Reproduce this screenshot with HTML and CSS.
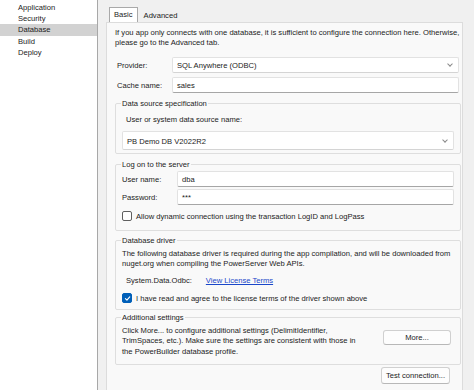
FILE: index.html
```html
<!DOCTYPE html>
<html lang="en">
<head>
  <meta charset="UTF-8" />
  <title>Database</title>
  <link rel="stylesheet" href="styles.css">
</head>
<body>
  <div class="window">
    <nav class="tree">
      <div class="tree-item">Application</div>
      <div class="tree-item">Security</div>
      <div class="tree-item selected">Database</div>
      <div class="tree-item">Build</div>
      <div class="tree-item">Deploy</div>
    </nav>

    <main class="pane">
      <div class="tabs">
        <div class="tab active">Basic</div>
        <div class="tab">Advanced</div>
      </div>

      <div class="tab-body">
        <p class="intro">If you app only connects with one database, it is sufficient to configure the connection here. Otherwise, please go to the Advanced tab.</p>

        <div class="form-row">
          <span class="label">Provider:</span>
          <div class="field select">SQL Anywhere (ODBC)<span class="chevron"></span></div>
        </div>
        <div class="form-row">
          <span class="label">Cache name:</span>
          <div class="field">sales</div>
        </div>

        <fieldset class="group source-group">
          <legend>Data source specification</legend>
          <div class="source-text">User or system data source name:</div>
          <div class="field select wide">PB Demo DB V2022R2<span class="chevron"></span></div>
        </fieldset>

        <fieldset class="group logon-group">
          <legend>Log on to the server</legend>
          <div class="form-row">
            <span class="label">User name:</span>
            <div class="field">dba</div>
          </div>
          <div class="form-row">
            <span class="label">Password:</span>
            <div class="field">***</div>
          </div>
          <label class="check-row">
            <span class="checkbox"></span>
            Allow dynamic connection using the transaction LogID and LogPass
          </label>
        </fieldset>

        <fieldset class="group driver-group">
          <legend>Database driver</legend>
          <p class="group-text">The following database driver is required during the app compilation, and will be downloaded from nuget.org when compiling the PowerServer Web APIs.</p>
          <div class="driver-row">
            <span class="driver-name">System.Data.Odbc:</span>
            <a href="#" class="link">View License Terms</a>
          </div>
          <label class="check-row">
            <span class="checkbox checked">
              <svg width="7" height="7" viewBox="0 0 10 10"><path d="M2 5.2 L4.2 7.4 L8.2 2.8" fill="none" stroke="#fff" stroke-width="1.6" stroke-linecap="round" stroke-linejoin="round"/></svg>
            </span>
            I have read and agree to the license terms of the driver shown above
          </label>
        </fieldset>

        <fieldset class="group more-group">
          <legend>Additional settings</legend>
          <div class="more-row">
            <p class="group-text">Click More... to configure additional settings (DelimitIdentifier, TrimSpaces, etc.). Make sure the settings are consistent with those in the PowerBuilder database profile.</p>
            <button class="btn">More...</button>
          </div>
        </fieldset>

        <div class="footer">
          <button class="btn">Test connection...</button>
        </div>
      </div>
    </main>
  </div>
</body>
</html>
```

FILE: styles.css
```css
body {
  margin: 0;
  font-family: "Liberation Sans", Arial, sans-serif;
  font-size: 7.6px;
  color: #1b1b1b;
  background: #f0f0f0;
}

.window {
  display: flex;
  width: 474px;
  height: 390px;
  overflow: hidden;
}

.tree {
  width: 97px;
  flex-shrink: 0;
  background: #fff;
  border-right: 1px solid #a8a8a8;
  padding-top: 2px;
}

.tree-item {
  height: 11.2px;
  line-height: 11px;
  padding-left: 18px;
}

.tree-item.selected {
  background: #d2d2d2;
}

.pane {
  flex: 1;
  display: flex;
  flex-direction: column;
  padding: 8px 11px 0 8px;
}

.tabs {
  display: flex;
  align-items: flex-end;
  height: 14px;
  padding-left: 3px;
}

.tab {
  padding: 0 4px;
  line-height: 13px;
  margin-right: 2px;
}

.tab.active {
  background: #fff;
  border: 1px solid #a9a9a9;
  border-bottom: none;
  height: 14px;
}

.tab-body {
  flex: 1;
  background: #f9f9f9;
  border: 1px solid #dcdcdc;
  border-bottom: none;
  padding: 5px 3px 0 8px;
}

.intro {
  margin: 0 -6px 7px 0;
  line-height: 10px;
}

.form-row {
  display: flex;
  align-items: center;
  height: 20px;
  padding-left: 2px;
}

.label {
  width: 55px;
  flex-shrink: 0;
}

.field {
  flex: 1;
  height: 16px;
  line-height: 16px;
  padding-left: 4px;
  background: #fff;
  border: 1px solid #e2e2e2;
  border-bottom-color: #a6a6a6;
  border-radius: 2px;
  box-sizing: border-box;
  position: relative;
}

.select {
  border-bottom-color: #d4d4d4;
}

.chevron {
  position: absolute;
  right: 6px;
  top: 50%;
  width: 3px;
  height: 3px;
  margin-top: -3px;
  border-right: 1px solid #8a8a8a;
  border-bottom: 1px solid #8a8a8a;
  transform: rotate(45deg);
}

.group {
  margin: 4px -2px 0 0;
  padding: 2px 6px 5px 6px;
  border: 1px solid #dedede;
  border-radius: 2px;
}

.group legend {
  padding: 0 1px;
  margin-left: -1px;
}

.group-text {
  margin: 0;
  line-height: 10.4px;
}

.source-group {
  padding-bottom: 3px;
}

.source-text {
  padding: 5px 0 0 4px;
}

.field.wide {
  height: 19px;
  line-height: 19px;
  margin-top: 7px;
}

.logon-group {
  margin-top: 6px;
  padding-top: 1px;
  padding-bottom: 4px;
}

.logon-group .form-row {
  padding-left: 0;
  height: 18px;
}

.check-row {
  display: flex;
  align-items: center;
  gap: 4px;
  height: 20px;
}

.checkbox {
  display: flex;
  align-items: center;
  justify-content: center;
  width: 8px;
  height: 8px;
  border: 1px solid #5f5f5f;
  border-radius: 2px;
  background: #fff;
}

.checkbox.checked {
  background: #005fb8;
  border-color: #005fb8;
}

.driver-group {
  margin-top: 5px;
  padding-bottom: 1px;
}

.driver-group .group-text {
  padding-top: 2px;
  line-height: 10px;
}

.driver-group .check-row {
  margin-top: 2px;
}

.driver-row {
  display: flex;
  gap: 14px;
  padding: 7px 0 0 4px;
  height: 10px;
}

.link {
  color: #1a47c9;
}

.more-group {
  margin-top: 3px;
  padding-top: 4px;
}

.more-row {
  display: flex;
  align-items: flex-start;
  gap: 20px;
  padding: 0 3px 2px 0;
}

.more-row .group-text {
  flex: 1;
}

.btn {
  font: inherit;
  color: #1b1b1b;
  background: #fdfdfd;
  border: 1px solid #d0d0d0;
  border-bottom-color: #b8b8b8;
  border-radius: 3px;
  height: 15px;
  width: 68px;
  padding: 0;
  margin-top: 4px;
  flex-shrink: 0;
}

.footer {
  display: flex;
  justify-content: flex-end;
  padding: 2px 9px 0 0;
}

.footer .btn {
  width: 69px;
  height: 17px;
  margin-top: 0;
}
```
